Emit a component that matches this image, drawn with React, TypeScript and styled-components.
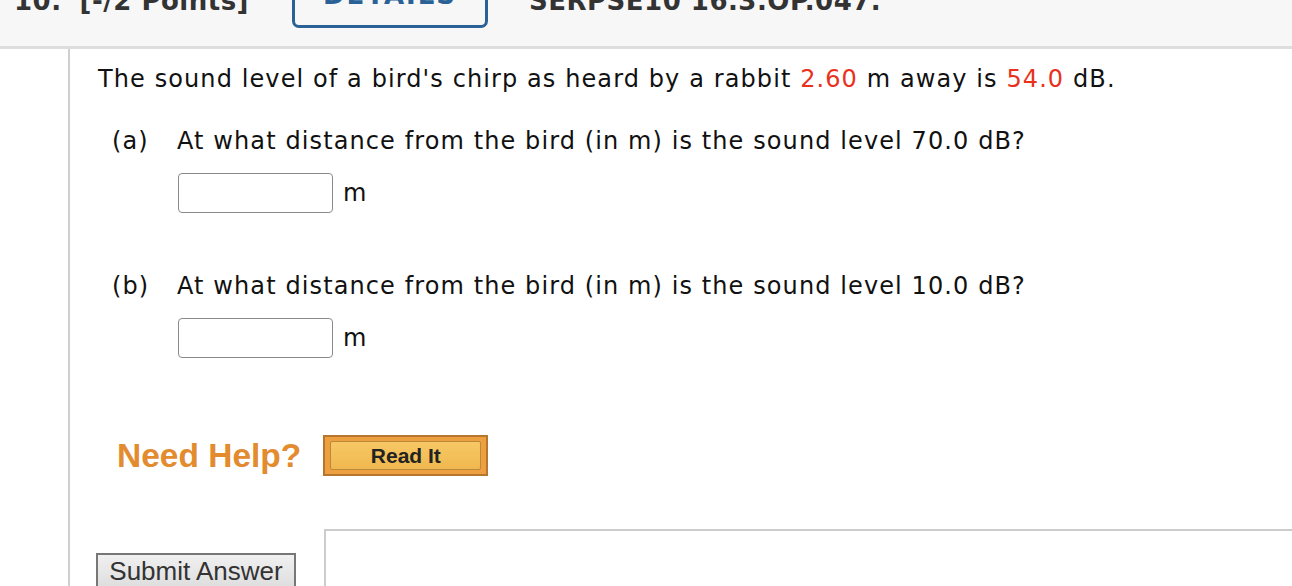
import React from 'react';
import styled, {createGlobalStyle} from 'styled-components';

const Global = createGlobalStyle`
  html, body {
    margin: 0;
    padding: 0;
    background: #fff;
    overflow: hidden;
  }
  body {
    font-family: "DejaVu Sans", Verdana, sans-serif;
    color: #111;
  }
`;

const Page = styled.div`
  width: 1292px;
  height: 586px;
  display: flex;
  flex-direction: column;
  overflow: hidden;
`;

const Header = styled.div`
  height: 46px;
  flex: none;
  background: #f7f7f7;
  border-bottom: 3px solid #dedede;
  overflow: hidden;
`;

const HeaderRow = styled.div`
  display: flex;
  align-items: flex-start;
  margin-top: -20px;
  padding-left: 14px;
  font-family: "DejaVu Sans", Verdana, sans-serif;
  font-weight: 700;
  font-size: 26px;
  letter-spacing: 0.5px;
  color: #333;
`;

const HeaderText = styled.span<{$gap?: number}>`
  line-height: 42px;
  margin-left: ${p => p.$gap ?? 0}px;
  white-space: nowrap;
`;

const DetailsButton = styled.div`
  margin-left: 43px;
  width: 196px;
  height: 48px;
  box-sizing: border-box;
  border: 3px solid #2a6196;
  border-radius: 7px;
  color: #2a6196;
  display: flex;
  justify-content: center;
  align-items: flex-start;
  line-height: 24px;
  letter-spacing: 2px;
`;

const Body = styled.div`
  flex: 1;
  display: flex;
`;

const Gutter = styled.div`
  width: 68px;
  flex: none;
  border-right: 2px solid #cfcfcf;
`;

const Content = styled.div`
  flex: 1;
  padding-left: 28px;
  padding-top: 15px;
  font-size: 24px;
  letter-spacing: 1.1px;
`;

const Question = styled.div`
  line-height: 30px;
  white-space: nowrap;
`;

const Red = styled.span`
  color: #e8321e;
`;

const Part = styled.div<{$top: number}>`
  display: flex;
  margin-top: ${p => p.$top}px;
  padding-left: 14px;
  line-height: 30px;
  white-space: nowrap;
`;

const PartLabel = styled.span`
  width: 65px;
  flex: none;
`;

const AnswerRow = styled.div`
  display: flex;
  align-items: center;
  margin-top: 17px;
  padding-left: 80px;
  gap: 10px;
`;

const AnswerInput = styled.input`
  width: 155px;
  height: 40px;
  box-sizing: border-box;
  border: 1px solid #8a8a8a;
  border-radius: 4px;
  margin: 0;
`;

const Unit = styled.span`
  font-size: 24px;
`;

const HelpRow = styled.div`
  display: flex;
  align-items: center;
  margin-top: 77px;
  padding-left: 19px;
  gap: 22px;
  letter-spacing: 0;
`;

const HelpLabel = styled.span`
  font-family: "Liberation Sans", Arial, sans-serif;
  font-weight: 700;
  font-size: 33.5px;
  color: #e38b2f;
`;

const ReadItButton = styled.div`
  width: 165px;
  height: 41px;
  box-sizing: border-box;
  border: 2px solid #b7762d;
  background: #eea040;
  padding: 4px 5px;
  display: flex;
`;

const ReadItFace = styled.div`
  flex: 1;
  background: linear-gradient(#f6c865, #f0b84f);
  border: 1px solid #b88a3a;
  border-radius: 2px;
  display: flex;
  align-items: center;
  justify-content: center;
  font-family: "Liberation Sans", Arial, sans-serif;
  font-weight: 700;
  font-size: 21px;
  color: #222;
`;

const BottomRow = styled.div`
  display: flex;
  align-items: flex-start;
  margin-top: 53px;
  margin-left: -2px;
  gap: 28px;
  letter-spacing: 0;
`;

const SubmitButton = styled.button`
  margin-top: 24px;
  width: 200px;
  height: 40px;
  box-sizing: border-box;
  border: 2px solid #777;
  background: linear-gradient(#f0f0f0, #dcdcdc);
  font-family: "Liberation Sans", Arial, sans-serif;
  font-size: 26px;
  color: #333;
  padding: 0 0 4px;
  display: flex;
  justify-content: center;
  align-items: center;
`;

const ResultBox = styled.div`
  flex: 1;
  height: 80px;
  border: 2px solid #cccccc;
  border-right: none;
`;

export default function App() {
  return (
    <Page>
      <Global />
      <Header>
        <HeaderRow>
          <HeaderText>10.</HeaderText>
          <HeaderText $gap={18}>[-/2 Points]</HeaderText>
          <DetailsButton>DETAILS</DetailsButton>
          <HeaderText $gap={41}>SERPSE10 16.3.OP.047.</HeaderText>
        </HeaderRow>
      </Header>
      <Body>
        <Gutter />
        <Content>
          <Question>
            The sound level of a bird's chirp as heard by a rabbit <Red>2.60</Red> m away is{' '}
            <Red>54.0</Red> dB.
          </Question>
          <Part $top={32}>
            <PartLabel>(a)</PartLabel>
            <span>At what distance from the bird (in m) is the sound level 70.0 dB?</span>
          </Part>
          <AnswerRow>
            <AnswerInput type="text" />
            <Unit>m</Unit>
          </AnswerRow>
          <Part $top={58}>
            <PartLabel>(b)</PartLabel>
            <span>At what distance from the bird (in m) is the sound level 10.0 dB?</span>
          </Part>
          <AnswerRow>
            <AnswerInput type="text" />
            <Unit>m</Unit>
          </AnswerRow>
          <HelpRow>
            <HelpLabel>Need Help?</HelpLabel>
            <ReadItButton>
              <ReadItFace>Read It</ReadItFace>
            </ReadItButton>
          </HelpRow>
          <BottomRow>
            <SubmitButton type="button">Submit Answer</SubmitButton>
            <ResultBox />
          </BottomRow>
        </Content>
      </Body>
    </Page>
  );
}
